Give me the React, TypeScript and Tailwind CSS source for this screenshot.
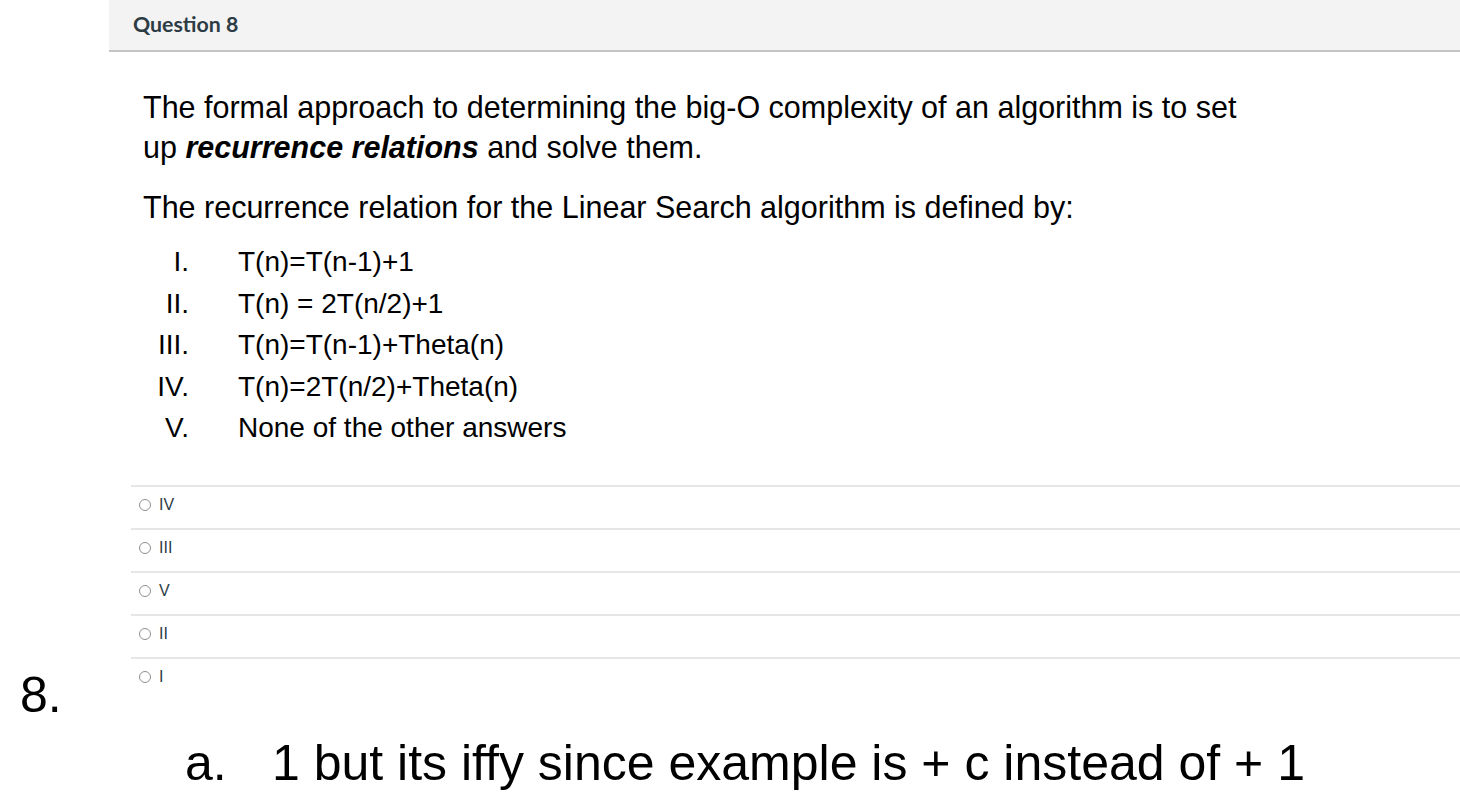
const definitions = [
  { num: 'I.', text: 'T(n)=T(n-1)+1' },
  { num: 'II.', text: 'T(n) = 2T(n/2)+1' },
  { num: 'III.', text: 'T(n)=T(n-1)+Theta(n)' },
  { num: 'IV.', text: 'T(n)=2T(n/2)+Theta(n)' },
  { num: 'V.', text: 'None of the other answers' },
];

const answers = ['IV', 'III', 'V', 'II', 'I'];

function QuizPanel() {
  return (
    <div className="flex-1 h-[720px] flex flex-col">
      {/* Question header */}
      <div className="h-[52px] bg-[#f3f3f3] border-b-2 border-[#c4c4c4] pl-[24px] flex items-center">
        <span className="font-['Lato',sans-serif] font-bold text-[21.3px] text-[#2d3b45]">Question 8</span>
      </div>

      {/* Question text */}
      <div className="pl-[34px] pt-[35px] text-black font-['Liberation_Sans',Arial,sans-serif]">
        <p className="text-[30.5px] leading-[40px]">
          The formal approach to determining the big-O complexity of an algorithm is to set
          <br />
          up <strong className="font-bold italic">recurrence relations</strong> and solve them.
        </p>
        <p className="text-[30.5px] leading-[40px] mt-[20px]">
          The recurrence relation for the Linear Search algorithm is defined by:
        </p>
        <ol className="mt-[14px] text-[28px] leading-[41.5px]">
          {definitions.map((d) => (
            <li key={d.num} className="flex">
              <span className="w-[46px] text-right">{d.num}</span>
              <span className="ml-[49px]">{d.text}</span>
            </li>
          ))}
        </ol>
      </div>

      {/* Answer choices */}
      <div className="ml-[22px] mt-[36px]">
        {answers.map((a) => (
          <label key={a} className="border-t-2 border-[#e6e6e6] h-[43px] pb-[4px] pl-[8px] flex items-center gap-[8px]">
            <span className="w-[12px] h-[12px] rounded-full border-[1.5px] border-[#8f8f8f] bg-white shrink-0" />
            <span className="font-['Liberation_Sans',Arial,sans-serif] text-[16px] leading-none text-[#2d3b45]">{a}</span>
          </label>
        ))}
      </div>
    </div>
  );
}

export default function App() {
  return (
    <div className="w-[1460px] h-[806px] overflow-hidden bg-white text-black font-['Liberation_Sans',Arial,sans-serif]">
      <div className="flex items-end">
        <div className="w-[109px] pl-[20px] text-[50px] leading-none">8.</div>
        <QuizPanel />
      </div>
      <div className="mt-[18px] pl-[185px] flex text-[50px] leading-none">
        <span className="w-[87px]">a.</span>
        <span>1 but its iffy since example is + c instead of + 1</span>
      </div>
    </div>
  );
}
